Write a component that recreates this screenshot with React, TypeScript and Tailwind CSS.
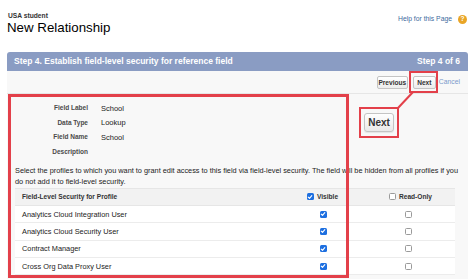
import React from 'react';

const profiles = [
  'Analytics Cloud Integration User',
  'Analytics Cloud Security User',
  'Contract Manager',
  'Cross Org Data Proxy User',
];

const fields = [
  { label: 'Field Label', value: 'School' },
  { label: 'Data Type', value: 'Lookup' },
  { label: 'Field Name', value: 'School' },
  { label: 'Description', value: '' },
];

const Checked = () => (
  <span className="inline-flex h-[7px] w-[7px] items-center justify-center rounded-[1.5px] bg-[#1d6fe0]">
    <svg viewBox="0 0 10 10" className="h-[6px] w-[6px]">
      <path d="M2 5.2 L4.2 7.4 L8 2.8" fill="none" stroke="white" strokeWidth="1.8" strokeLinecap="round" strokeLinejoin="round" />
    </svg>
  </span>
);

const Unchecked = () => (
  <span className="inline-block h-[7px] w-[7px] rounded-[1.5px] border border-[#9a9a9a] bg-white" />
);

export default function App() {
  return (
    <div
      className="relative h-[279px] w-[474px] overflow-hidden bg-white text-[#222]"
      style={{ fontFamily: '"Liberation Sans", Arial, sans-serif' }}
    >
      {/* Page title */}
      <div className="flex h-[52px] justify-between px-[7px] pt-[11px]">
        <div>
          <div className="pl-px text-[6.7px] font-bold leading-[9px] text-[#333]">USA student</div>
          <div className="text-[13.3px] leading-[16px] text-black">New Relationship</div>
        </div>
        <div className="mt-[1px] flex h-[14px] items-center gap-[6px]">
          <span className="text-[6.8px] text-[#3e6b9e]">Help for this Page</span>
          <span className="flex h-[9px] w-[9px] items-center justify-center rounded-full bg-[#e9a526] text-[6.5px] font-bold leading-none text-white">
            ?
          </span>
        </div>
      </div>

      <div className="mx-[7px] w-[461px]">
        {/* Step header */}
        <div className="flex h-[19px] items-center justify-between rounded-t-[3px] bg-[#8a9cc3] px-[7px] text-[8.5px] font-bold text-white">
          <span>Step 4. Establish field-level security for reference field</span>
          <span className="pr-px">Step 4 of 6</span>
        </div>

        <div className="h-[220px] bg-[#f8f8f8]">
          {/* Buttons */}
          <div className="flex h-[23px] items-center justify-end border-b border-[#e6e6e6] pr-[8px] pt-px">
            <button className="h-[13px] w-[31px] rounded-[2px] border border-[#c4c4c4] bg-gradient-to-b from-white to-[#ececec] text-[6.6px] font-bold text-[#333]">
              Previous
            </button>
            <button className="ml-[5px] h-[13px] w-[23px] rounded-[2px] border border-[#c4c4c4] bg-gradient-to-b from-white to-[#ececec] text-[6.6px] font-bold text-[#333]">
              Next
            </button>
            <span className="ml-[3px] text-[6.8px] text-[#7b9acb]">Cancel</span>
          </div>

          {/* Field info */}
          <div className="pt-[7px]">
            {fields.map((f) => (
              <div key={f.label} className="flex h-[14.5px] items-center">
                <span className="w-[81px] text-right text-[6.5px] font-bold text-[#4a4a4a]">{f.label}</span>
                <span className="ml-[13px] text-[7.5px] text-[#222]">{f.value}</span>
              </div>
            ))}
          </div>

          {/* Description */}
          <div className="mt-[6px] pl-[8px] text-[7.35px] leading-[11px] text-[#222]">
            <div className="whitespace-nowrap">
              Select the profiles to which you want to grant edit access to this field via field-level security. The field will be hidden from all profiles if you
            </div>
            <div className="whitespace-nowrap">do not add it to field-level security.</div>
          </div>

          {/* Profiles table */}
          <div className="ml-[8px] mt-[1px] w-[440px] bg-white">
            <div className="flex h-[18px] items-center border-y border-[#e6e6e6] bg-[#f2f2f2] text-[6.6px] font-bold text-[#333]">
              <div className="w-[273px] pl-[7px]">Field-Level Security for Profile</div>
              <div className="flex w-[70px] items-center justify-center gap-[3px] pr-px">
                <Checked />
                <span>Visible</span>
              </div>
              <div className="flex w-[97px] items-center justify-center gap-[3px] pl-[8px]">
                <Unchecked />
                <span>Read-Only</span>
              </div>
            </div>
            {profiles.map((p) => (
              <div key={p} className="flex h-[17.3px] items-center border-b border-[#ececec] text-[7.35px] text-[#222]">
                <div className="w-[273px] pl-[7px]">{p}</div>
                <div className="flex w-[70px] justify-center">
                  <Checked />
                </div>
                <div className="flex w-[97px] justify-center pl-[3px]">
                  <Unchecked />
                </div>
              </div>
            ))}
          </div>
        </div>
      </div>

      {/* Annotations */}
      <div className="pointer-events-none absolute left-[8px] top-[94px] h-[184px] w-[341px] border-[3px] border-[#e3404a]" />
      <div className="pointer-events-none absolute left-[409px] top-[71px] h-[22px] w-[29px] border-2 border-[#e3404a]" />
      <svg className="pointer-events-none absolute left-0 top-0" width="474" height="279">
        <line x1="413" y1="92" x2="398" y2="108" stroke="#e3404a" strokeWidth="2" />
      </svg>
      <div className="absolute left-[359px] top-[107px] flex h-[31px] w-[40px] items-center justify-center border-2 border-[#e3404a]">
        <button className="h-[19px] w-[30px] rounded-[3px] border border-[#c4c4c4] bg-gradient-to-b from-white to-[#e9e9e9] text-[10px] font-bold text-[#333] shadow-[0_1px_1px_rgba(0,0,0,0.08)]">
          Next
        </button>
      </div>
    </div>
  );
}
